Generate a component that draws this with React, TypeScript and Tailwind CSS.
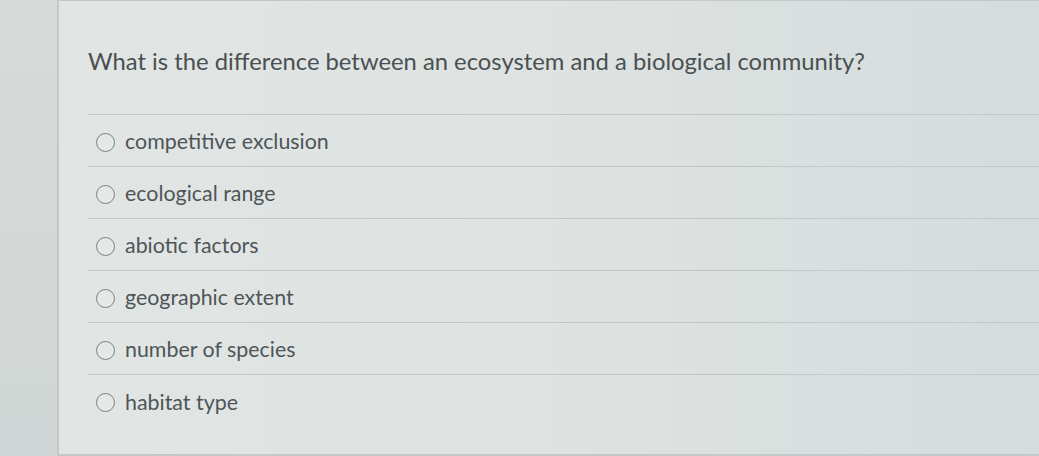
import React from 'react';

const options = [
  'competitive exclusion',
  'ecological range',
  'abiotic factors',
  'geographic extent',
  'number of species',
  'habitat type',
];

const Radio: React.FC = () => (
  <span className="inline-block h-[19px] w-[19px] shrink-0 rounded-full border-[1.5px] border-[#7c8383] bg-[#e4e8e7]" />
);

export default function App() {
  return (
    <div
      className="flex h-[456px] w-[1039px] overflow-hidden bg-[#d3d9d8] text-[#4f5556]"
      style={{ fontFamily: 'Lato, "Open Sans", sans-serif' }}
    >
      {/* gutter */}
      <div className="w-[57px] shrink-0 bg-linear-to-b from-[#d6dbda] to-[#d0d6d5]" />

      {/* question panel */}
      <div className="flex-1 border-t border-b-2 border-l-2 border-[#c3c9c8] bg-linear-to-r from-[#e1e5e4] via-[#dee3e2] to-[#d5dcdb] pl-[29px]">
        <div className="pt-[45px] pb-[38px] text-[23.8px] leading-[30px] text-[#4a5051]">
          What is the difference between an ecosystem and a biological community?
        </div>

        <div className="border-t border-[#c2c8c7]">
          {options.map((opt, i) => (
            <div
              key={opt}
              className={
                'flex h-[52px] items-center gap-[10px] pt-[3px] pl-[8px] ' +
                (i < options.length - 1 ? 'border-b border-[#c2c8c7]' : '')
              }
            >
              <Radio />
              <span className="text-[21.4px] leading-none text-[#4e5558]">{opt}</span>
            </div>
          ))}
        </div>
      </div>
    </div>
  );
}
